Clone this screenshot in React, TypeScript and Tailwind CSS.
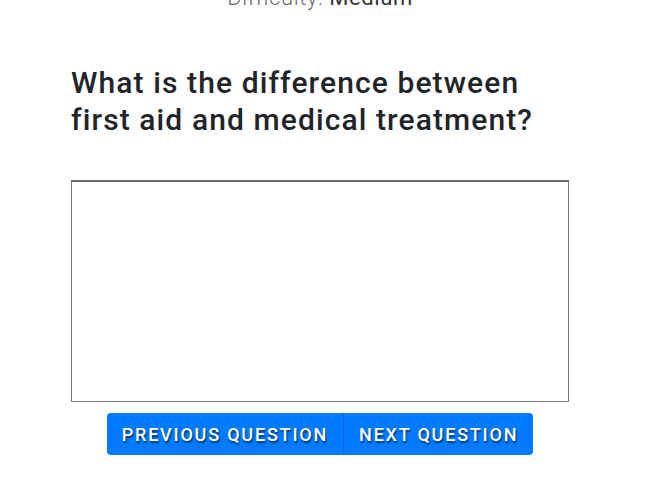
export default function App() {
  return (
    <div className="min-h-[485px] bg-white font-['Roboto',sans-serif] overflow-hidden">
      <div className="w-[498px] ml-[71px]">
        <p className="-mt-[17px] text-center text-[22px] leading-[30px] tracking-[0.6px]">
          <span className="font-light text-[#6c6c6c]">Difficulty: </span>
          <span className="text-[#333]">Medium</span>
        </p>
        <h2 className="mt-[51px] w-[480px] text-[30px] leading-[37px] font-medium text-[#212529] tracking-[1.1px]">
          What is the difference between first aid and medical treatment?
        </h2>
        <textarea className="mt-[42px] block h-[222px] w-full resize-none border border-[#767676] border-t-2 border-t-[#6a6a6a] bg-white" />
        <div className="mt-[11px] flex justify-center">
          <div className="flex overflow-hidden rounded-[4px] bg-[#007bff]">
            <button className="h-[42px] px-[15px] text-[18px] font-medium uppercase tracking-[1.8px] text-white [text-shadow:1px_2px_2px_rgba(0,0,0,0.6)] border-r border-[#0069d9]">
              Previous Question
            </button>
            <button className="h-[42px] px-[15px] text-[18px] font-medium uppercase tracking-[1.8px] text-white [text-shadow:1px_2px_2px_rgba(0,0,0,0.6)]">
              Next Question
            </button>
          </div>
        </div>
      </div>
    </div>
  );
}
